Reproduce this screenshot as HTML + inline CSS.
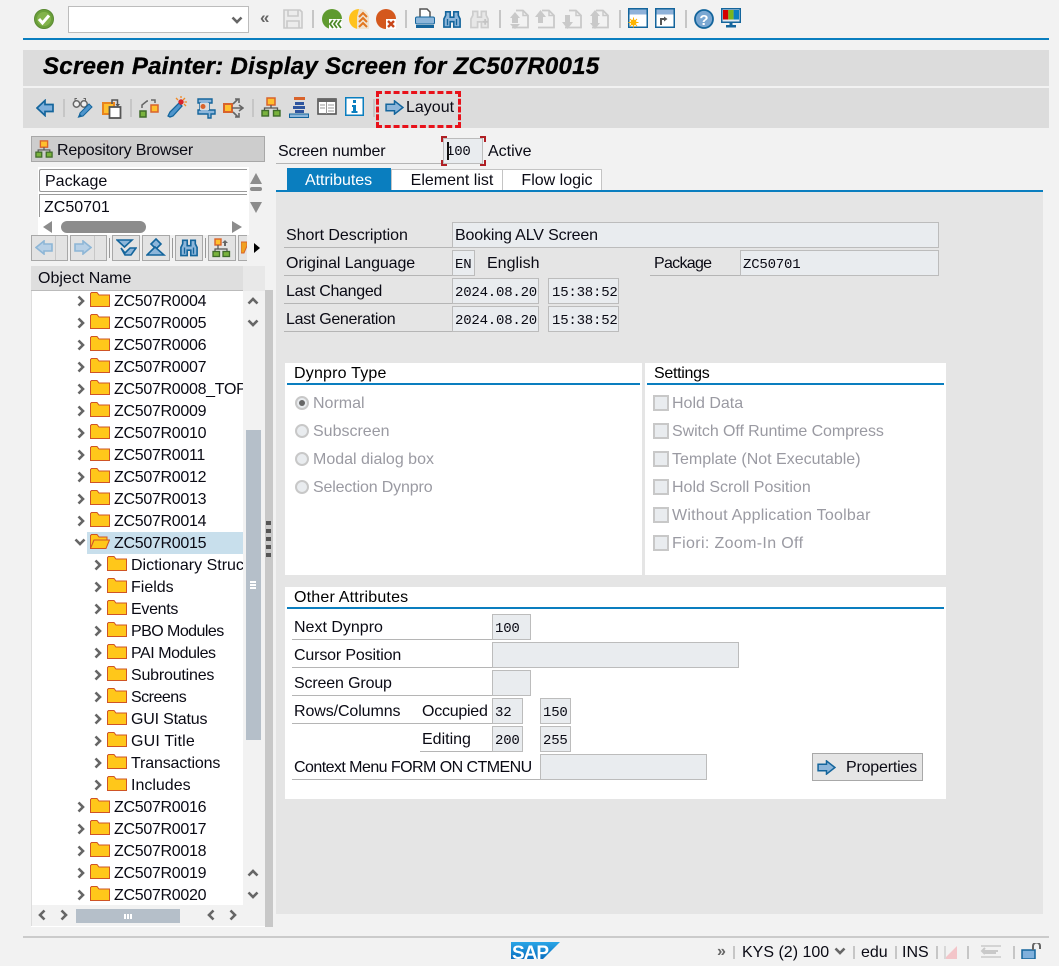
<!DOCTYPE html>
<html><head><meta charset="utf-8"><title>Screen Painter</title>
<style>
html,body{margin:0;padding:0}
body{width:1059px;height:959px;background:#f2f2f2;position:relative;overflow:hidden;font:16px/22px "Liberation Sans",sans-serif;color:#0a0a14}
div,span,svg{position:absolute}
.t{white-space:nowrap;line-height:26px}
.m{white-space:nowrap;font-family:"Liberation Mono",monospace;font-size:14px;line-height:22px;letter-spacing:-.2px;margin-top:2px}
.f{background:#e9ecef;border:1px solid #bcbcbc;box-sizing:border-box}
.u{height:1px;background:#b5b5b5}
.g{color:#9a9aa2}
.s{width:2px;background:#c6c6c6}
.b{background:#e3e3e3;border:1px solid #a8a8a8;box-sizing:border-box}
.p{background:#fff}
.bl{height:2px;background:#0a7ebf}
.rd{width:14px;height:14px;border-radius:50%;background:#e9ecef;border:2px solid #c8c8c8;box-sizing:border-box}
.ck{width:16px;height:16px;background:#e9ecef;border:2px solid #c8c8c8;box-sizing:border-box}
.tr .t{letter-spacing:-.3px}
.tr svg[width="8"]{margin-top:-1px}
</style></head><body>
<svg width="0" height="0" style="position:absolute">
<defs>
<symbol id="fo" viewBox="0 0 20 15"><path d="M.5 14.500V1.500L1.500 .5H7L9 3H19.500V14.500Z" fill="#ffc71a" stroke="#cf5426"/></symbol>
<symbol id="fopen" viewBox="0 0 20 15"><path d="M.5 14.500V1.500L1.500 .5H7L9 3H17V6H4L.5 14.500Z" fill="#ffc71a" stroke="#cf5426"/><path d="M.5 14.500L4 6H19.500L16 14.500Z" fill="#ffc71a" stroke="#cf5426"/></symbol>
<symbol id="cr" viewBox="0 0 8 12"><path d="M1.500 1.500L6 6L1.500 10.500" fill="none" stroke="#666" stroke-width="2.600"/></symbol>
<symbol id="cd" viewBox="0 0 12 8"><path d="M1.500 1.500L6 6L10.500 1.500" fill="none" stroke="#666" stroke-width="2.600"/></symbol>
<symbol id="cu" viewBox="0 0 12 8"><path d="M1.500 6.500L6 2L10.500 6.500" fill="none" stroke="#666" stroke-width="2.600"/></symbol>
<symbol id="cl" viewBox="0 0 8 12"><path d="M6.500 1.500L2 6L6.500 10.500" fill="none" stroke="#666" stroke-width="2.600"/></symbol>
<symbol id="ar" viewBox="0 0 20 16"><path d="M1 4.500H10V1L19 8L10 15V11.500H1Z" fill="#8db6da" stroke="#14659c" stroke-width="1.600"/></symbol>
<symbol id="hier" viewBox="0 0 20 20"><rect x="6" y="1" width="8" height="7" fill="#ffc02e" stroke="#d9632b" stroke-width="1.500"/><path d="M10 8V11M3.500 14V11H16.500V14" fill="none" stroke="#555" stroke-width="1.300"/><rect x="1" y="13.500" width="6.500" height="5.500" fill="#79b33d" stroke="#3f6b2a" stroke-width="1.400"/><rect x="12.500" y="13.500" width="6.500" height="5.500" fill="#79b33d" stroke="#3f6b2a" stroke-width="1.400"/></symbol>
<symbol id="bino" viewBox="0 0 20 20"><path d="M3 2H8V8H12V2H17V6L19 10V19H12V13H8V19H1V10L3 6Z" fill="#8db6da" stroke="#14659c" stroke-width="1.800"/><path d="M5 10V17M15 10V17" stroke="#14659c" stroke-width="1.500"/></symbol>
<symbol id="pg" viewBox="0 0 20 20"><path d="M7 1.500H14L19 6.500V18.500H3" fill="none" stroke="#c9c9c9" stroke-width="1.800"/><path d="M14 1.500V6.500H19" fill="none" stroke="#c9c9c9" stroke-width="1.500"/></symbol>
</defs></svg>

<!-- system toolbar -->
<svg style="left:34px;top:9px" width="20" height="20" viewBox="0 0 20 20"><circle cx="10" cy="10" r="9.500" fill="#6a9f3a" stroke="#5a8a32"/><circle cx="10" cy="10" r="7" fill="#83b34c"/><path d="M5 10L8.500 14L15 6.500" fill="none" stroke="#fff" stroke-width="3"/></svg>
<div style="left:68px;top:6px;width:181px;height:27px;background:#fff;border:1px solid #bcbcbc;box-sizing:border-box"></div>
<svg style="left:231px;top:16px" width="12" height="8"><use href="#cd"/></svg>
<div class="t" style="left:260px;top:5px;color:#666;font-size:17px;font-weight:bold">«</div>
<svg style="left:283px;top:9px" width="20" height="20" viewBox="0 0 20 20"><path d="M1 1H17L19 3V19H1Z" fill="#ececec" stroke="#c9c9c9" stroke-width="1.600"/><path d="M5 1V7H15V1M4 19V12H16V19" fill="none" stroke="#c9c9c9" stroke-width="1.600"/></svg>
<div class="s" style="left:312px;top:10px;height:18px"></div>
<svg style="left:322px;top:9px" width="20" height="20" viewBox="0 0 20 20"><circle cx="10" cy="10" r="10" fill="#5f9a2f"/><rect x="7" y="10" width="13" height="10" fill="#fff"/><path d="M11 11L8 15L11 19M15 11L12 15L15 19M19 11L16 15L19 19" fill="none" stroke="#4d8a28" stroke-width="1.800"/></svg>
<svg style="left:349px;top:9px" width="20" height="20" viewBox="0 0 20 20"><circle cx="10" cy="10" r="10" fill="#ffc21c"/><path d="M10 0A10 10 0 0 1 20 10V20H8V8Z" fill="#f0e3d0"/><path d="M10 8L14 4L18 8M10 13L14 9L18 13M10 18L14 14L18 18" fill="none" stroke="#e2761f" stroke-width="2"/></svg>
<svg style="left:376px;top:9px" width="20" height="20" viewBox="0 0 20 20"><circle cx="10" cy="10" r="10" fill="#d4581d"/><rect x="10" y="10" width="10" height="10" fill="#fff"/><path d="M12 12L18 18M18 12L12 18" stroke="#c8461a" stroke-width="2.400"/></svg>
<div class="s" style="left:405px;top:10px;height:18px"></div>
<svg style="left:415px;top:8px" width="20" height="21" viewBox="0 0 20 21"><path d="M5 9V1H12L15 4V9" fill="#fff" stroke="#555" stroke-width="1.500"/><rect x="0.500" y="9" width="19" height="7" rx="1.500" fill="#8db6da" stroke="#14659c"/><rect x="1" y="17" width="18" height="3" fill="#14659c"/></svg>
<svg style="left:443px;top:9px" width="18" height="20"><use href="#bino"/></svg>
<svg style="left:470px;top:9px;opacity:.9" width="19" height="20" viewBox="0 0 20 20"><path d="M3 2H8V8H12V2H17V6L19 10V19H12V13H8V19H1V10L3 6Z" fill="#e6e6e6" stroke="#c9c9c9" stroke-width="1.800"/><path d="M13 13H19M16 10V16" stroke="#c0c0c0" stroke-width="2"/></svg>
<div class="s" style="left:499px;top:10px;height:18px"></div>
<svg style="left:509px;top:9px" width="20" height="20"><use href="#pg"/><path d="M1 9L6 3L11 9ZM3 9H9V14H3ZM1 15L6 20L11 15Z" fill="#c9c9c9"/></svg>
<svg style="left:535px;top:9px" width="20" height="20"><use href="#pg"/><path d="M0 8L5.500 1L11 8H8V14H3V8Z" fill="#c9c9c9"/></svg>
<svg style="left:562px;top:9px" width="20" height="20"><use href="#pg"/><path d="M0 13L5.500 20L11 13H8V6H3V13Z" fill="#c9c9c9"/></svg>
<svg style="left:589px;top:9px" width="20" height="20"><use href="#pg"/><path d="M1 7L6 1L11 7ZM3 7H9V14H3ZM1 14L6 20L11 14Z" fill="#c9c9c9"/></svg>
<div class="s" style="left:619px;top:10px;height:18px"></div>
<svg style="left:628px;top:8px" width="20" height="20" viewBox="0 0 20 20"><rect x=".75" y=".75" width="18.500" height="18.500" fill="#fff" stroke="#14659c" stroke-width="1.500"/><rect x="1.500" y="1.500" width="17" height="5" fill="#8fb2d9"/><circle cx="5.500" cy="14.500" r="3" fill="#ffb400"/><path d="M5.500 9.500V19.500M.5 14.500H10.500M2 11L9 18M9 11L2 18" stroke="#ffb400"/></svg>
<svg style="left:655px;top:8px" width="20" height="20" viewBox="0 0 20 20"><rect x=".75" y=".75" width="18.500" height="18.500" fill="#fff" stroke="#14659c" stroke-width="1.500"/><rect x="1.500" y="1.500" width="17" height="5" fill="#8fb2d9"/><path d="M6 17V11H9.500" fill="none" stroke="#555" stroke-width="2"/><path d="M9 8.500L12.500 11L9 13.500Z" fill="#555"/></svg>
<div class="s" style="left:685px;top:10px;height:18px"></div>
<svg style="left:694px;top:9px" width="20" height="20" viewBox="0 0 20 20"><circle cx="10" cy="10" r="9" fill="#7aa7d2" stroke="#14659c" stroke-width="1.800"/><text x="10" y="16" font-family="Liberation Sans" font-size="15" font-weight="bold" text-anchor="middle" fill="#fff">?</text></svg>
<svg style="left:721px;top:8px" width="20" height="20" viewBox="0 0 20 20"><rect x=".75" y=".75" width="18.500" height="13.500" fill="#dfe8f0" stroke="#14659c" stroke-width="1.500"/><rect x="2" y="2" width="5.300" height="9.500" fill="#d60000"/><rect x="7.300" y="2" width="5.300" height="9.500" fill="#7ab51d"/><rect x="12.600" y="2" width="5.400" height="9.500" fill="#0a7ebf"/><path d="M8.500 15H11.500V17H15V19.500H5V17H8.500Z" fill="#14659c"/></svg>
<div class="bl" style="left:23px;top:38px;width:1026px"></div>

<!-- title -->
<div style="left:23px;top:50px;width:1026px;height:36px;background:#dcdcdc"></div>
<div class="t" style="left:43px;top:50px;line-height:34px;font-size:24px;font-weight:bold;font-style:italic;color:#000;letter-spacing:.3px;-webkit-text-stroke:.35px #000">Screen Painter: Display Screen for ZC507R0015</div>
<div style="left:23px;top:88px;width:1026px;height:40px;background:#dcdcdc"></div>

<!-- app toolbar -->
<svg style="left:36px;top:99px" width="18" height="18" viewBox="0 0 18 18"><path d="M17 5.500H9V1.500L1 9L9 16.500V12.500H17Z" fill="#7fb0dc" stroke="#14659c" stroke-width="1.700"/></svg>
<div class="s" style="left:63px;top:99px;height:18px"></div>
<svg style="left:72px;top:97px" width="21" height="22" viewBox="0 0 21 22"><circle cx="4.500" cy="7" r="3.200" fill="#eee" stroke="#666" stroke-width="1.500"/><circle cx="12" cy="7" r="3.200" fill="#eee" stroke="#666" stroke-width="1.500"/><path d="M3 3.500V1.500H5M13.500 3.500V1.500H11.500" fill="none" stroke="#666"/><path d="M7 20L8 16L17 7L20 10L11 19Z" fill="#4f95cc" stroke="#14659c"/><path d="M5.500 21L7.500 16.500L10 19Z" fill="#14659c"/></svg>
<svg style="left:102px;top:97px" width="20" height="22" viewBox="0 0 20 22"><rect x="1" y="6" width="11" height="11" fill="#ffc02e" stroke="#e8841f" stroke-width="2"/><rect x="7.500" y="10" width="11" height="11" fill="#fff" stroke="#555" stroke-width="1.800"/><path d="M10 7V3H15.500V8" fill="none" stroke="#555" stroke-width="1.500"/><path d="M13.500 7L15.500 10L18 7Z" fill="#555"/></svg>
<div class="s" style="left:130px;top:99px;height:18px"></div>
<svg style="left:139px;top:97px" width="20" height="21" viewBox="0 0 20 21"><rect x="1" y="14" width="6" height="6" fill="#79b33d" stroke="#3f6b2a" stroke-width="1.500"/><rect x="12" y="8" width="7" height="7" fill="#ffc02e" stroke="#d9632b" stroke-width="1.500"/><path d="M3 11V8L8 4H9M12 3H16V6" fill="none" stroke="#666" stroke-width="1.500"/></svg>
<svg style="left:167px;top:96px" width="20" height="22" viewBox="0 0 20 22"><path d="M1 20L3 16L12 7L15 10L6 20L3 21Z" fill="#4f95cc" stroke="#14659c" stroke-width="1.300"/><circle cx="14" cy="6" r="2.700" fill="#d8232a"/><path d="M14 0V2M20 6H17.500M18 2L16 4M9 2L11 4M19 10L17 8" stroke="#f08a24" stroke-width="1.300"/></svg>
<svg style="left:196px;top:97px" width="20" height="22" viewBox="0 0 20 22"><path d="M2 2H16V6H13V13H19V17H15V21H12V17H2V13H4V6H2Z" fill="#8db6da" stroke="#14659c" stroke-width="1.400"/><rect x="4" y="6" width="9" height="7" fill="#dcdcdc"/><circle cx="7" cy="9.500" r="2.500" fill="#d9632b"/></svg>
<svg style="left:223px;top:97px" width="21" height="22" viewBox="0 0 21 22"><rect x="1" y="7" width="8" height="8" fill="#ffc02e" stroke="#d9632b" stroke-width="2"/><path d="M9 11H19M16 8L20 11L16 14M10 7L15 2M12 2H16V6M10 15L15 20M12 20H16V16" fill="none" stroke="#666" stroke-width="1.600"/></svg>
<div class="s" style="left:252px;top:99px;height:18px"></div>
<svg style="left:261px;top:97px" width="20" height="20"><use href="#hier"/></svg>
<svg style="left:289px;top:97px" width="20" height="21" viewBox="0 0 20 21"><rect x="5" y="0" width="11" height="3" fill="#d9632b"/><rect x="6" y="5" width="9" height="3" fill="#2f559e"/><rect x="4" y="9" width="12" height="3" fill="#2f559e"/><rect x="6" y="13" width="9" height="3" fill="#2f559e"/><rect x=".5" y="17" width="19" height="3.500" fill="#8db6da" stroke="#14659c"/></svg>
<svg style="left:317px;top:98px" width="20" height="17" viewBox="0 0 20 17"><rect x="1" y="1" width="18" height="15" fill="#fff" stroke="#555" stroke-width="1.600"/><rect x="1" y="1" width="18" height="3" fill="#666"/><path d="M9.500 4V16M3 7H8M3 10H8M11 7H17M11 10H17M11 13H17" stroke="#999"/></svg>
<svg style="left:345px;top:97px" width="19" height="19" viewBox="0 0 19 19"><rect x=".75" y=".75" width="17.500" height="17.500" fill="#fff" stroke="#0a7ebf" stroke-width="1.500"/><rect x="8" y="3" width="3" height="3" fill="#0a7ebf"/><path d="M7 8H11V14H12.500V16H6.500V14H8V10H7Z" fill="#0a7ebf"/></svg>
<div class="s" style="left:373px;top:99px;height:18px"></div>
<div style="left:376px;top:91px;width:85px;height:37px;box-sizing:border-box;border:3px dashed #e8111a"></div>
<svg style="left:385px;top:100px" width="19" height="15"><use href="#ar"/></svg>
<div class="t" style="left:406px;top:95px">Layout</div>

<!-- left panel -->
<div style="left:31px;top:136px;width:234px;height:26px;background:#cdcdcd;border:1px solid #a8a8a8;box-sizing:border-box"></div>
<svg style="left:35px;top:140px" width="18" height="18"><use href="#hier"/></svg>
<div class="t" style="left:57px;top:138px;letter-spacing:-.2px">Repository Browser</div>
<div style="left:38px;top:167px;width:211px;height:68px;background:#fff"></div>
<div style="left:39px;top:169px;width:208px;height:23px;background:#fff;border:1px solid #999;border-right:0;box-sizing:border-box;border-radius:2px 0 0 2px"></div>
<div class="t" style="left:45px;top:169px">Package</div>
<div style="left:39px;top:194px;width:208px;height:23px;background:#fff;border:1px solid #999;border-right:0;border-bottom:0;box-sizing:border-box"></div>
<div class="t" style="left:44px;top:195px">ZC50701</div>
<svg style="left:249px;top:172px" width="14" height="44" viewBox="0 0 14 44"><path d="M1 12L7 1L13 12Z" fill="#8c8c8c"/><rect x="1" y="15" width="12" height="4" rx="2" fill="#8c8c8c"/><path d="M1 30L7 41L13 30Z" fill="#8c8c8c"/></svg>
<svg style="left:42px;top:220px" width="210" height="14" viewBox="0 0 210 14"><path d="M10 1L1 7L10 13Z" fill="#8c8c8c"/><rect x="19" y="1" width="85" height="12" rx="6" fill="#8c8c8c"/><path d="M190 1L200 7L190 13Z" fill="#8c8c8c"/></svg>
<div style="left:31px;top:235px;width:234px;height:30px;background:#f2f2f2"></div>
<!-- mini toolbar -->
<div class="b" style="left:31px;top:235px;width:37px;height:26px"></div><div style="left:55px;top:236px;width:1px;height:24px;background:#c8c8c8"></div>
<svg style="left:35px;top:240px" width="18" height="15" viewBox="0 0 18 15"><path d="M17 4H9V1L1 7.500L9 14V11H17Z" fill="#b7d0e6" stroke="#8db6d6" stroke-width="1.600"/></svg>
<div class="b" style="left:70px;top:235px;width:37px;height:26px"></div><div style="left:94px;top:236px;width:1px;height:24px;background:#c8c8c8"></div>
<svg style="left:74px;top:240px" width="18" height="15" viewBox="0 0 18 15"><path d="M1 4H9V1L17 7.500L9 14V11H1Z" fill="#b7d0e6" stroke="#8db6d6" stroke-width="1.600"/></svg>
<div class="s" style="left:109px;top:238px;height:20px;width:1px;background:#999"></div>
<div class="b" style="left:112px;top:235px;width:28px;height:26px"></div>
<svg style="left:116px;top:238px" width="21" height="19" viewBox="0 0 21 19"><path d="M1 2H16L8.500 9Z" fill="#8db6da" stroke="#14659c" stroke-width="1.600"/><path d="M5 10L9 15L14 10H20L15 17H9Z" fill="#8db6da" stroke="#14659c" stroke-width="1.600"/></svg>
<div class="b" style="left:142px;top:235px;width:28px;height:26px"></div>
<svg style="left:146px;top:238px" width="21" height="19" viewBox="0 0 21 19"><path d="M10 1L15 6L10 11L5 6Z" fill="#8db6da" stroke="#14659c" stroke-width="1.600"/><path d="M1 17L9 9L18 17Z" fill="#8db6da" stroke="#14659c" stroke-width="1.600"/></svg>
<div class="s" style="left:172px;top:238px;height:20px;width:1px;background:#999"></div>
<div class="b" style="left:175px;top:235px;width:28px;height:26px"></div>
<svg style="left:180px;top:238px" width="18" height="19"><use href="#bino"/></svg>
<div class="s" style="left:205px;top:238px;height:20px;width:1px;background:#999"></div>
<div class="b" style="left:208px;top:235px;width:28px;height:26px"></div>
<svg style="left:212px;top:238px" width="20" height="20" viewBox="0 0 20 20"><rect x="3" y="1" width="6" height="6" fill="#ffc02e" stroke="#d9632b" stroke-width="1.400"/><path d="M13 2L16 5H14V8H12V5H10Z" fill="#666"/><path d="M6 7V11M3 14V11H15V14" fill="none" stroke="#555" stroke-width="1.200"/><rect x="1" y="13.500" width="6.500" height="5" fill="#79b33d" stroke="#3f6b2a" stroke-width="1.300"/><rect x="11" y="13.500" width="6.500" height="5" fill="#79b33d" stroke="#3f6b2a" stroke-width="1.300"/></svg>
<div class="b" style="left:238px;top:235px;width:9px;height:26px;border-right:0"></div>
<svg style="left:241px;top:241px" width="6" height="15" viewBox="0 0 6 15"><path d="M0 1H6V5L3 12H0Z" fill="#f0a020" stroke="#d9632b"/></svg>
<svg style="left:254px;top:243px" width="6" height="10"><path d="M0 0L6 5L0 10Z" fill="#000"/></svg>
<!-- list -->
<div style="left:31px;top:266px;width:234px;height:661px;background:#f2f2f2;border-left:1px solid #ddd;box-sizing:border-box"></div>
<div style="left:31px;top:266px;width:212px;height:25px;background:#dedede;border-bottom:1px solid #bbb;box-sizing:border-box"></div>
<div style="left:243px;top:266px;width:22px;height:25px;background:#e8e8e8"></div>
<div class="t" style="left:38px;top:266px">Object Name</div>
<div class="tr" style="left:32px;top:291px;width:211px;height:614px;background:#fff;overflow:hidden">
<div style="left:55px;top:241px;width:156px;height:22px;background:#c8dfec"></div>
<svg style="left:45px;top:5px" width="8" height="12"><use href="#cr"/></svg><svg style="left:58px;top:1px" width="20" height="15"><use href="#fo"/></svg><div class="t" style="left:82px;top:-2px">ZC507R0004</div>
<svg style="left:45px;top:27px" width="8" height="12"><use href="#cr"/></svg><svg style="left:58px;top:23px" width="20" height="15"><use href="#fo"/></svg><div class="t" style="left:82px;top:20px">ZC507R0005</div>
<svg style="left:45px;top:49px" width="8" height="12"><use href="#cr"/></svg><svg style="left:58px;top:45px" width="20" height="15"><use href="#fo"/></svg><div class="t" style="left:82px;top:42px">ZC507R0006</div>
<svg style="left:45px;top:71px" width="8" height="12"><use href="#cr"/></svg><svg style="left:58px;top:67px" width="20" height="15"><use href="#fo"/></svg><div class="t" style="left:82px;top:64px">ZC507R0007</div>
<svg style="left:45px;top:93px" width="8" height="12"><use href="#cr"/></svg><svg style="left:58px;top:89px" width="20" height="15"><use href="#fo"/></svg><div class="t" style="left:82px;top:86px">ZC507R0008_TOP</div>
<svg style="left:45px;top:115px" width="8" height="12"><use href="#cr"/></svg><svg style="left:58px;top:111px" width="20" height="15"><use href="#fo"/></svg><div class="t" style="left:82px;top:108px">ZC507R0009</div>
<svg style="left:45px;top:137px" width="8" height="12"><use href="#cr"/></svg><svg style="left:58px;top:133px" width="20" height="15"><use href="#fo"/></svg><div class="t" style="left:82px;top:130px">ZC507R0010</div>
<svg style="left:45px;top:159px" width="8" height="12"><use href="#cr"/></svg><svg style="left:58px;top:155px" width="20" height="15"><use href="#fo"/></svg><div class="t" style="left:82px;top:152px">ZC507R0011</div>
<svg style="left:45px;top:181px" width="8" height="12"><use href="#cr"/></svg><svg style="left:58px;top:177px" width="20" height="15"><use href="#fo"/></svg><div class="t" style="left:82px;top:174px">ZC507R0012</div>
<svg style="left:45px;top:203px" width="8" height="12"><use href="#cr"/></svg><svg style="left:58px;top:199px" width="20" height="15"><use href="#fo"/></svg><div class="t" style="left:82px;top:196px">ZC507R0013</div>
<svg style="left:45px;top:225px" width="8" height="12"><use href="#cr"/></svg><svg style="left:58px;top:221px" width="20" height="15"><use href="#fo"/></svg><div class="t" style="left:82px;top:218px">ZC507R0014</div>
<svg style="left:42px;top:247px" width="12" height="8"><use href="#cd"/></svg><svg style="left:58px;top:243px" width="20" height="15"><use href="#fopen"/></svg><div class="t" style="left:82px;top:240px">ZC507R0015</div>
<svg style="left:62px;top:269px" width="8" height="12"><use href="#cr"/></svg><svg style="left:75px;top:265px" width="20" height="15"><use href="#fo"/></svg><div class="t" style="left:99px;top:262px;letter-spacing:0">Dictionary Structures</div>
<svg style="left:62px;top:291px" width="8" height="12"><use href="#cr"/></svg><svg style="left:75px;top:287px" width="20" height="15"><use href="#fo"/></svg><div class="t" style="left:99px;top:284px;letter-spacing:0">Fields</div>
<svg style="left:62px;top:313px" width="8" height="12"><use href="#cr"/></svg><svg style="left:75px;top:309px" width="20" height="15"><use href="#fo"/></svg><div class="t" style="left:99px;top:306px">Events</div>
<svg style="left:62px;top:335px" width="8" height="12"><use href="#cr"/></svg><svg style="left:75px;top:331px" width="20" height="15"><use href="#fo"/></svg><div class="t" style="left:99px;top:328px;letter-spacing:-.55px">PBO Modules</div>
<svg style="left:62px;top:357px" width="8" height="12"><use href="#cr"/></svg><svg style="left:75px;top:353px" width="20" height="15"><use href="#fo"/></svg><div class="t" style="left:99px;top:350px;letter-spacing:-.45px">PAI Modules</div>
<svg style="left:62px;top:379px" width="8" height="12"><use href="#cr"/></svg><svg style="left:75px;top:375px" width="20" height="15"><use href="#fo"/></svg><div class="t" style="left:99px;top:372px;letter-spacing:-.2px">Subroutines</div>
<svg style="left:62px;top:401px" width="8" height="12"><use href="#cr"/></svg><svg style="left:75px;top:397px" width="20" height="15"><use href="#fo"/></svg><div class="t" style="left:99px;top:394px;letter-spacing:-.5px">Screens</div>
<svg style="left:62px;top:423px" width="8" height="12"><use href="#cr"/></svg><svg style="left:75px;top:419px" width="20" height="15"><use href="#fo"/></svg><div class="t" style="left:99px;top:416px;letter-spacing:-.2px">GUI Status</div>
<svg style="left:62px;top:445px" width="8" height="12"><use href="#cr"/></svg><svg style="left:75px;top:441px" width="20" height="15"><use href="#fo"/></svg><div class="t" style="left:99px;top:438px;letter-spacing:.2px">GUI Title</div>
<svg style="left:62px;top:467px" width="8" height="12"><use href="#cr"/></svg><svg style="left:75px;top:463px" width="20" height="15"><use href="#fo"/></svg><div class="t" style="left:99px;top:460px;letter-spacing:-.15px">Transactions</div>
<svg style="left:62px;top:489px" width="8" height="12"><use href="#cr"/></svg><svg style="left:75px;top:485px" width="20" height="15"><use href="#fo"/></svg><div class="t" style="left:99px;top:482px;letter-spacing:0">Includes</div>
<svg style="left:45px;top:511px" width="8" height="12"><use href="#cr"/></svg><svg style="left:58px;top:507px" width="20" height="15"><use href="#fo"/></svg><div class="t" style="left:82px;top:504px">ZC507R0016</div>
<svg style="left:45px;top:533px" width="8" height="12"><use href="#cr"/></svg><svg style="left:58px;top:529px" width="20" height="15"><use href="#fo"/></svg><div class="t" style="left:82px;top:526px">ZC507R0017</div>
<svg style="left:45px;top:555px" width="8" height="12"><use href="#cr"/></svg><svg style="left:58px;top:551px" width="20" height="15"><use href="#fo"/></svg><div class="t" style="left:82px;top:548px">ZC507R0018</div>
<svg style="left:45px;top:577px" width="8" height="12"><use href="#cr"/></svg><svg style="left:58px;top:573px" width="20" height="15"><use href="#fo"/></svg><div class="t" style="left:82px;top:570px">ZC507R0019</div>
<svg style="left:45px;top:599px" width="8" height="12"><use href="#cr"/></svg><svg style="left:58px;top:595px" width="20" height="15"><use href="#fo"/></svg><div class="t" style="left:82px;top:592px">ZC507R0020</div>
</div>
<!-- vertical scrollbar -->
<div style="left:246px;top:430px;width:15px;height:310px;background:#b5bfc9"></div>
<div style="left:250px;top:581px;width:6px;height:8px;background:repeating-linear-gradient(#fff 0 2px,transparent 2px 3px)"></div>
<svg style="left:247px;top:297px" width="12" height="8"><use href="#cu"/></svg>
<svg style="left:247px;top:319px" width="12" height="8"><use href="#cd"/></svg>
<svg style="left:247px;top:869px" width="12" height="8"><use href="#cu"/></svg>
<svg style="left:247px;top:891px" width="12" height="8"><use href="#cd"/></svg>
<!-- horizontal scrollbar -->
<svg style="left:38px;top:909px" width="8" height="12"><use href="#cl"/></svg>
<svg style="left:60px;top:909px" width="8" height="12"><use href="#cr"/></svg>
<div style="left:76px;top:909px;width:104px;height:14px;background:#b5bfc9"></div>
<div style="left:124px;top:914px;width:8px;height:5px;background:repeating-linear-gradient(90deg,#fff 0 2px,transparent 2px 3px)"></div>
<svg style="left:207px;top:909px" width="8" height="12"><use href="#cl"/></svg>
<svg style="left:229px;top:909px" width="8" height="12"><use href="#cr"/></svg>
<div style="left:31px;top:926px;width:234px;height:1px;background:#fff"></div>
<!-- sash -->
<div style="left:265px;top:290px;width:8px;height:637px;background:#c8c8c8"></div>
<div style="left:266px;top:521px;width:5px;height:36px;background:repeating-linear-gradient(#555 0 4px,transparent 4px 8px)"></div>

<!-- main header -->
<div class="t" style="left:278px;top:139px;letter-spacing:-.15px">Screen number</div>
<div class="u" style="left:276px;top:163px;width:167px"></div>
<div class="f" style="left:443px;top:138px;width:40px;height:26px"></div>
<div class="m" style="left:446px;top:139px">100</div>
<div style="left:447px;top:142px;width:2px;height:18px;background:#111"></div>
<div style="left:441px;top:136px;width:6px;height:6px;border-left:2px solid #b01f24;border-top:2px solid #b01f24;box-sizing:border-box"></div>
<div style="left:480px;top:136px;width:6px;height:6px;border-right:2px solid #b01f24;border-top:2px solid #b01f24;box-sizing:border-box"></div>
<div style="left:441px;top:160px;width:6px;height:6px;border-left:2px solid #b01f24;border-bottom:2px solid #b01f24;box-sizing:border-box"></div>
<div style="left:480px;top:160px;width:6px;height:6px;border-right:2px solid #b01f24;border-bottom:2px solid #b01f24;box-sizing:border-box"></div>
<div class="t" style="left:488px;top:139px">Active</div>

<!-- main area -->
<div style="left:276px;top:190px;width:767px;height:724px;background:#e5e5e5"></div>
<div class="bl" style="left:276px;top:190px;width:767px"></div>
<div class="t" style="left:287px;top:168px;width:104px;height:22px;background:#0a7ebf;color:#fff;text-align:center;line-height:25px;letter-spacing:-.05px;padding-right:1px;box-sizing:border-box">Attributes</div>
<div class="t" style="left:391px;top:169px;width:112px;height:21px;background:#fff;border:1px solid #c4c4c4;border-bottom:0;box-sizing:border-box;text-align:center;line-height:22px;padding-left:10px">Element list</div>
<div class="t" style="left:502px;top:169px;width:100px;height:21px;background:#fff;border:1px solid #c4c4c4;border-bottom:0;box-sizing:border-box;text-align:center;line-height:22px;padding-left:10px">Flow logic</div>

<div class="t" style="left:286px;top:223px;letter-spacing:-.05px">Short Description</div><div class="u" style="left:284px;top:247px;width:168px"></div>
<div class="f" style="left:452px;top:222px;width:487px;height:26px"></div><div class="t" style="left:455px;top:223px;letter-spacing:-.15px">Booking ALV Screen</div>
<div class="t" style="left:286px;top:251px;letter-spacing:-.1px">Original Language</div><div class="u" style="left:284px;top:275px;width:168px"></div>
<div class="f" style="left:452px;top:250px;width:23px;height:26px"></div><div class="m" style="left:455px;top:252px">EN</div>
<div class="t" style="left:487px;top:251px">English</div>
<div class="t" style="left:654px;top:251px;letter-spacing:-.7px">Package</div><div class="u" style="left:650px;top:275px;width:90px"></div>
<div class="f" style="left:740px;top:250px;width:199px;height:26px"></div><div class="m" style="left:743px;top:252px">ZC50701</div>
<div class="t" style="left:286px;top:279px;letter-spacing:-.3px">Last Changed</div><div class="u" style="left:284px;top:303px;width:168px"></div>
<div class="f" style="left:452px;top:278px;width:87px;height:26px"></div><div class="m" style="left:455px;top:280px">2024.08.20</div>
<div class="f" style="left:548px;top:278px;width:71px;height:26px"></div><div class="m" style="left:552px;top:280px">15:38:52</div>
<div class="t" style="left:286px;top:307px;letter-spacing:-.3px">Last Generation</div><div class="u" style="left:284px;top:331px;width:168px"></div>
<div class="f" style="left:452px;top:306px;width:87px;height:26px"></div><div class="m" style="left:455px;top:308px">2024.08.20</div>
<div class="f" style="left:548px;top:306px;width:71px;height:26px"></div><div class="m" style="left:552px;top:308px">15:38:52</div>

<!-- Dynpro type -->
<div class="p" style="left:285px;top:363px;width:357px;height:212px"></div>
<div class="t" style="left:294px;top:361px;color:#000;letter-spacing:.2px">Dynpro Type</div>
<div class="bl" style="left:287px;top:383px;width:353px"></div>
<div class="rd" style="left:295px;top:396px"></div><div style="left:299px;top:400px;width:6px;height:6px;border-radius:50%;background:#666"></div>
<div class="t g" style="left:313px;top:391px">Normal</div>
<div class="rd" style="left:295px;top:424px"></div><div class="t g" style="left:313px;top:419px">Subscreen</div>
<div class="rd" style="left:295px;top:452px"></div><div class="t g" style="left:313px;top:447px">Modal dialog box</div>
<div class="rd" style="left:295px;top:480px"></div><div class="t g" style="left:313px;top:475px;letter-spacing:-.15px">Selection Dynpro</div>

<!-- settings -->
<div class="p" style="left:645px;top:363px;width:301px;height:212px"></div>
<div class="t" style="left:654px;top:361px;color:#000;letter-spacing:-.3px">Settings</div>
<div class="bl" style="left:647px;top:383px;width:297px"></div>
<div class="ck" style="left:653px;top:395px"></div><div class="t g" style="left:672px;top:391px">Hold Data</div>
<div class="ck" style="left:653px;top:423px"></div><div class="t g" style="left:672px;top:419px;letter-spacing:-.08px">Switch Off Runtime Compress</div>
<div class="ck" style="left:653px;top:451px"></div><div class="t g" style="left:672px;top:447px">Template (Not Executable)</div>
<div class="ck" style="left:653px;top:479px"></div><div class="t g" style="left:672px;top:475px">Hold Scroll Position</div>
<div class="ck" style="left:653px;top:507px"></div><div class="t g" style="left:672px;top:503px;letter-spacing:.22px">Without Application Toolbar</div>
<div class="ck" style="left:653px;top:535px"></div><div class="t g" style="left:672px;top:531px;letter-spacing:.35px">Fiori: Zoom-In Off</div>

<!-- other attributes -->
<div class="p" style="left:285px;top:587px;width:661px;height:212px"></div>
<div class="t" style="left:294px;top:585px;color:#000;letter-spacing:.2px">Other Attributes</div>
<div class="bl" style="left:287px;top:607px;width:657px"></div>
<div class="t" style="left:294px;top:615px">Next Dynpro</div><div class="u" style="left:292px;top:639px;width:200px"></div>
<div class="f" style="left:492px;top:614px;width:39px;height:26px"></div><div class="m" style="left:495px;top:616px">100</div>
<div class="t" style="left:294px;top:643px;letter-spacing:-.15px">Cursor Position</div><div class="u" style="left:292px;top:667px;width:200px"></div>
<div class="f" style="left:492px;top:642px;width:247px;height:26px"></div>
<div class="t" style="left:294px;top:671px;letter-spacing:-.15px">Screen Group</div><div class="u" style="left:292px;top:695px;width:200px"></div>
<div class="f" style="left:492px;top:670px;width:39px;height:26px"></div>
<div class="t" style="left:294px;top:699px;letter-spacing:-.1px">Rows/Columns</div><div class="t" style="left:422px;top:699px;letter-spacing:-.25px">Occupied</div><div class="u" style="left:292px;top:723px;width:200px"></div>
<div class="f" style="left:492px;top:698px;width:31px;height:26px"></div><div class="m" style="left:495px;top:700px">32</div>
<div class="f" style="left:540px;top:698px;width:31px;height:26px"></div><div class="m" style="left:543px;top:700px">150</div>
<div class="t" style="left:422px;top:727px">Editing</div><div class="u" style="left:420px;top:751px;width:72px"></div>
<div class="f" style="left:492px;top:726px;width:31px;height:26px"></div><div class="m" style="left:495px;top:728px">200</div>
<div class="f" style="left:540px;top:726px;width:31px;height:26px"></div><div class="m" style="left:543px;top:728px">255</div>
<div class="t" style="left:294px;top:755px;letter-spacing:-.55px">Context Menu FORM ON CTMENU</div><div class="u" style="left:292px;top:779px;width:248px"></div>
<div class="f" style="left:540px;top:754px;width:167px;height:26px"></div>
<div style="left:812px;top:753px;width:111px;height:28px;background:#e5e5e5;border:1px solid #a8a8a8;box-sizing:border-box"></div>
<svg style="left:817px;top:760px" width="19" height="15"><use href="#ar"/></svg>
<div class="t" style="left:846px;top:755px;letter-spacing:-.2px">Properties</div>

<!-- status bar -->
<div style="left:23px;top:936px;width:1026px;height:2px;background:#cbcbcb"></div>
<svg style="left:511px;top:942px" width="49" height="17" viewBox="0 0 49 17"><defs><linearGradient id="sg" x1="0" y1="0" x2="0" y2="1"><stop offset="0" stop-color="#2aa5e6"/><stop offset="1" stop-color="#0a6fc0"/></linearGradient></defs><path d="M0 0H49L32 17H0Z" fill="url(#sg)"/><text x="1" y="17" font-family="Liberation Sans" font-size="19" font-weight="bold" letter-spacing="-1" fill="#fff">SAP</text></svg>
<div class="t" style="left:717px;top:939px;color:#666;font-size:16px;font-weight:bold">»</div>
<div class="s" style="left:733px;top:946px;height:13px"></div>
<div class="t" style="left:742px;top:940px">KYS (2) 100</div>
<svg style="left:834px;top:947px" width="12" height="8"><use href="#cd"/></svg>
<div class="s" style="left:853px;top:946px;height:13px"></div>
<div class="t" style="left:861px;top:940px">edu</div>
<div class="s" style="left:895px;top:946px;height:13px"></div>
<div class="t" style="left:902px;top:940px">INS</div>
<div class="s" style="left:936px;top:946px;height:13px"></div>
<svg style="left:944px;top:946px" width="15" height="13"><path d="M0 13L13 0V13Z" fill="#f3c5c9"/><rect x="0" y="0" width="2" height="13" fill="#d8d8d8"/></svg>
<div class="s" style="left:967px;top:946px;height:13px"></div>
<svg style="left:980px;top:945px" width="22" height="14" viewBox="0 0 22 14"><path d="M1 1H21M21 12H1" stroke="#c9c9c9" stroke-width="1.500"/><path d="M3 6H18M5 3L2 6L5 9M16 8H4" stroke="#c9c9c9" stroke-width="2" fill="none"/></svg>
<div class="s" style="left:1013px;top:946px;height:13px"></div>
<svg style="left:1021px;top:943px" width="21" height="16" viewBox="0 0 21 16"><rect x="1" y="7" width="13" height="9" fill="#7fb0dc" stroke="#14659c" stroke-width="1.500"/><path d="M12 7V3A3 3 0 0 1 19 3V6" fill="none" stroke="#666" stroke-width="2"/></svg>
</body></html>
